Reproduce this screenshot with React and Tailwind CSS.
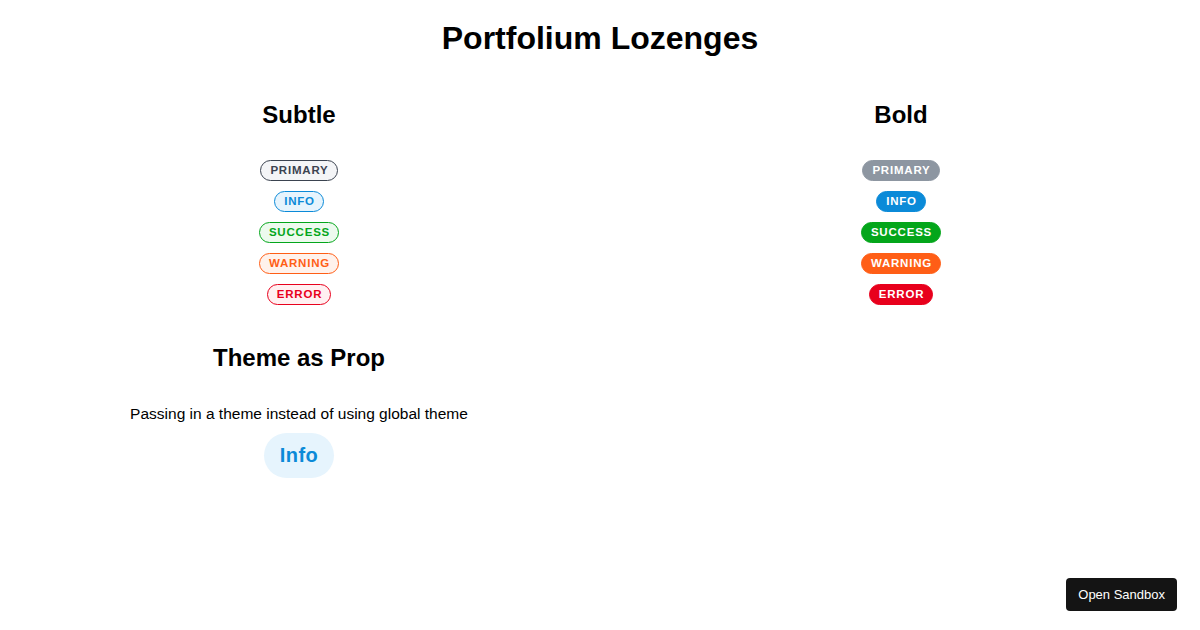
import React from 'react';

const subtle = {
  primary: 'border-[#3b4350] bg-[#f4f5f7] text-[#3b4350]',
  info: 'border-[#0b8ad8] bg-[#e6f4fd] text-[#0b8ad8]',
  success: 'border-[#04a61b] bg-[#edfaee] text-[#04a61b]',
  warning: 'border-[#ff5e16] bg-[#fff2ec] text-[#ff5e16]',
  error: 'border-[#e8001c] bg-[#fff0f1] text-[#e8001c]',
};

const bold = {
  primary: 'border-[#8d96a1] bg-[#8d96a1] text-white',
  info: 'border-[#0b8ad8] bg-[#0b8ad8] text-white',
  success: 'border-[#04a61b] bg-[#04a61b] text-white',
  warning: 'border-[#ff5e16] bg-[#ff5e16] text-white',
  error: 'border-[#e8001c] bg-[#e8001c] text-white',
};

const kinds = ['primary', 'info', 'success', 'warning', 'error'];

function Lozenge({ kind, colors }) {
  return (
    <span
      className={`inline-block rounded-full border pl-[9px] pr-[8px] py-[3px] text-[11.5px] leading-[13px] font-bold uppercase tracking-[0.8px] ${colors[kind]}`}
    >
      {kind}
    </span>
  );
}

function Column({ title, colors }) {
  return (
    <div className="flex flex-col items-center">
      <h2 className="mt-[44px] text-[24px] leading-[28px] font-bold">{title}</h2>
      <div className="mt-[31px] flex flex-col items-center gap-[10px]">
        {kinds.map((k) => (
          <Lozenge key={k} kind={k} colors={colors} />
        ))}
      </div>
    </div>
  );
}

export default function App() {
  return (
    <div className="min-h-screen bg-white text-black font-['Liberation_Sans',Arial,sans-serif]">
      <h1 className="pt-[20px] text-center text-[32px] leading-[37px] font-bold">Portfolium Lozenges</h1>

      <div className="grid grid-cols-2 gap-x-4 px-[6px]">
        <Column title="Subtle" colors={subtle} />
        <Column title="Bold" colors={bold} />

        <div className="flex flex-col items-center">
          <h2 className="mt-[39px] text-[24px] leading-[28px] font-bold">Theme as Prop</h2>
          <p className="mt-[33px] text-[15.5px] leading-[18px]">Passing in a theme instead of using global theme</p>
          <span className="mt-[10px] inline-block rounded-full bg-[#e6f4fd] px-[16px] py-[11px] text-[20px] leading-[23px] font-bold tracking-[0.5px] text-[#0b8ad8]">
            Info
          </span>
        </div>
      </div>

      <button className="fixed right-[23px] bottom-[19px] rounded-[4px] bg-[#141414] px-[12px] py-[9px] text-[13px] leading-[15px] text-white">
        Open Sandbox
      </button>
    </div>
  );
}
